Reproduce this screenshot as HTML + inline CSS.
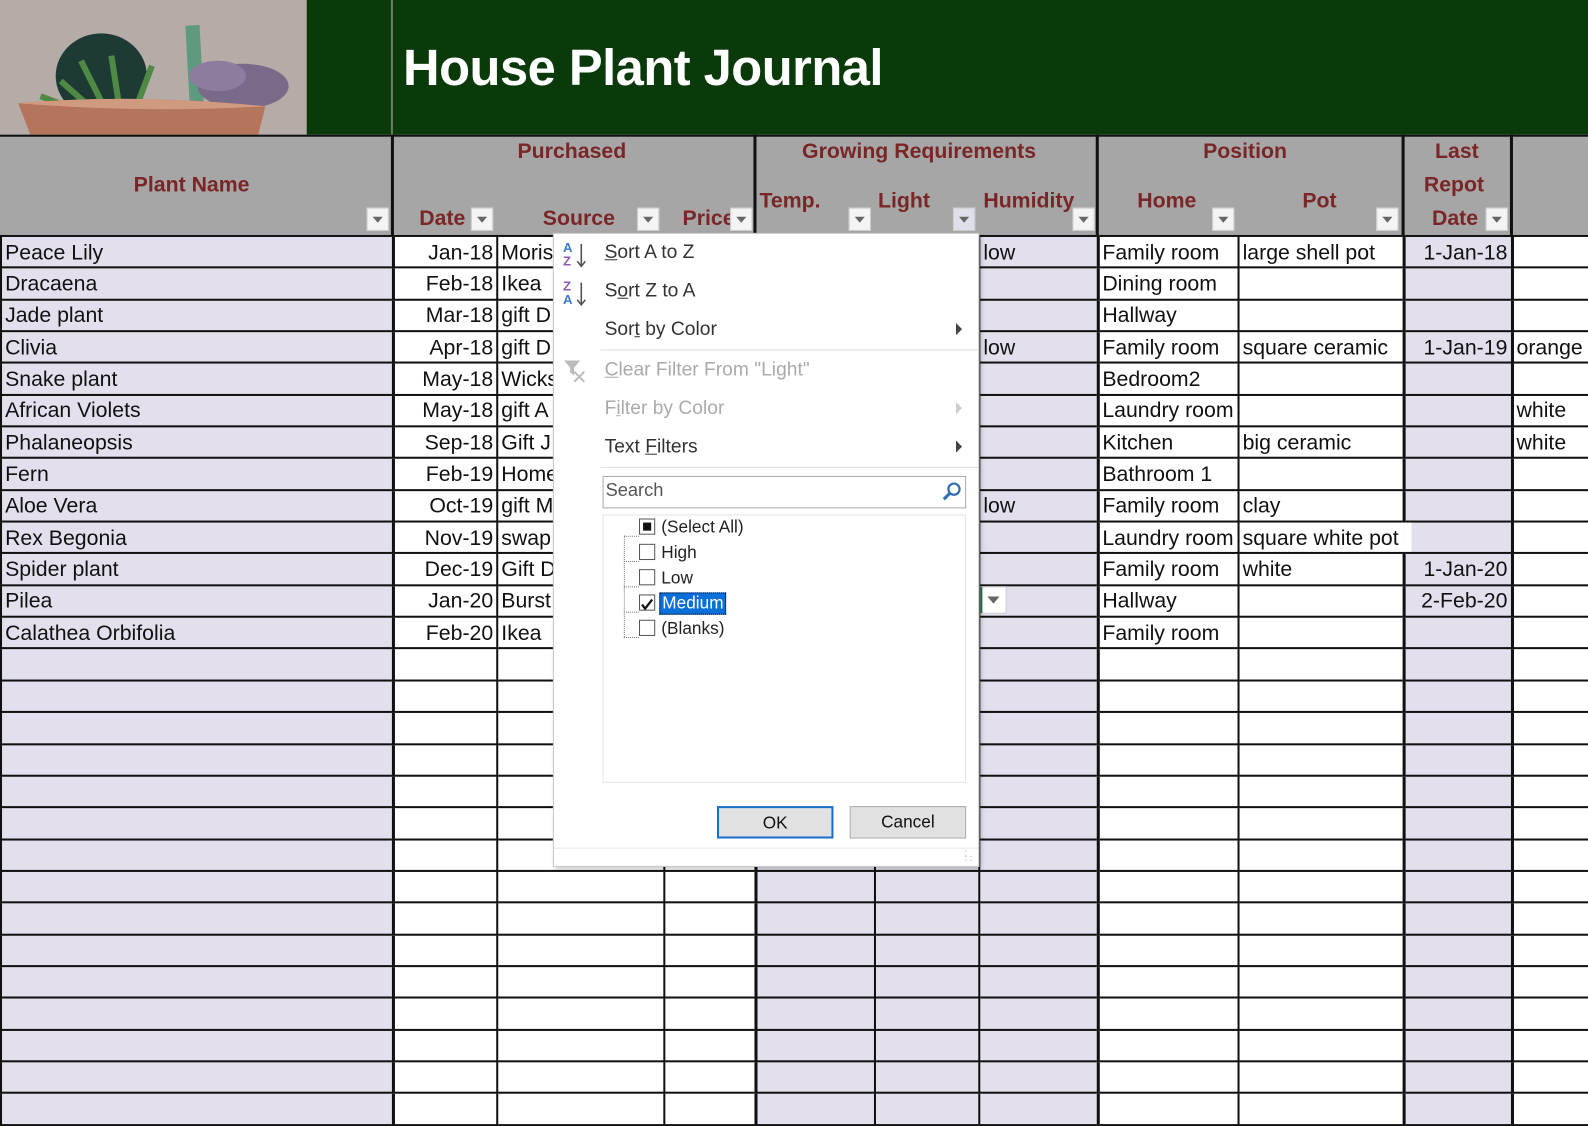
<!DOCTYPE html>
<html><head><meta charset="utf-8"><style>
*{box-sizing:border-box;margin:0;padding:0}
body{width:1588px;height:1112px;overflow:hidden;background:#fff;font-family:"Liberation Sans",sans-serif;position:relative}
#w{position:absolute;left:0;top:0;width:1570px;height:1100px;transform:scale(1.0127);transform-origin:0 0}
.ban{position:absolute;left:0;top:0;width:1570px;height:133px;background:#0a3a0a}
.sep{position:absolute;left:386px;top:0;width:2px;height:133px;background:#6b7d6b}
.title{position:absolute;left:398px;top:38px;color:#fff;font-weight:bold;font-size:50px;letter-spacing:-0.5px}
.hdr{position:absolute;left:0;top:133px;width:1570px;height:99px;background:#a6a6a6;border-top:2px solid #111}
.h{position:absolute;color:#7a2626;font-weight:bold;font-size:21px;white-space:nowrap}
.vl{position:absolute;top:133px;height:99px;width:3px;background:#111}
.dd{position:absolute;top:205px;width:22px;height:23px;background:#f4f4f4;border:1px solid #ccc}
.dd:after{content:"";position:absolute;left:5px;top:8px;border-left:5px solid transparent;border-right:5px solid transparent;border-top:6px solid #666}
table{position:absolute;left:0;top:232px;border-collapse:collapse;table-layout:fixed;width:1590px}
td{height:31.35px;border:2px solid #111;font-size:21px;color:#111;white-space:nowrap;overflow:visible;padding:2px 3px 0;line-height:26px}
td.l{background:#e3dfec}
td.r{text-align:right}
td.tk{border-right:3px solid #111}
.dlg{position:absolute;left:546px;top:230px;width:421px;height:626px;background:#fff;border:1px solid #c8c8c8;box-shadow:2px 2px 4px rgba(0,0,0,.25);font-size:19px;color:#333}
.mi{position:absolute;left:50px;white-space:nowrap}
.dis{color:#aaa}
.arr{position:absolute;right:16px;width:0;height:0;border-top:6px solid transparent;border-bottom:6px solid transparent;border-left:6px solid #444}
.hr{position:absolute;left:46px;right:0;height:1px;background:#ddd}
.cb{position:absolute;left:84px;width:16px;height:16px;border:1px solid #555;background:#fff}
.lt{position:absolute;left:106px;font-size:17px;color:#222}
.btn{position:absolute;top:565px;height:32px;background:#e1e1e1;border:1px solid #adadad;font-size:17px;text-align:center;line-height:30px;color:#111}
</style></head><body><div id="w">
<div class="ban"></div>
<svg style="position:absolute;left:0;top:0" width="303" height="133" viewBox="0 0 303 133">
<rect width="303" height="133" fill="#b5aca8"/>
<ellipse cx="100" cy="75" rx="45" ry="42" fill="#1e3a34"/>
<g stroke="#4f8a45" stroke-width="6" fill="none"><path d="M120 120 L110 55"/><path d="M110 120 L80 60"/><path d="M130 118 L150 65"/><path d="M100 118 L40 95"/><path d="M105 120 L60 80"/></g>
<path d="M195 115 L190 25" stroke="#5d9a80" stroke-width="14"/>
<ellipse cx="240" cy="85" rx="45" ry="22" fill="#7a6a8a"/>
<ellipse cx="215" cy="75" rx="28" ry="15" fill="#8d7c9e"/>
<path d="M18 102 Q130 92 262 105 L255 133 L30 133 Z" fill="#b5755a"/>
<path d="M18 102 Q130 92 262 105 Q140 112 18 102Z" fill="#d09a7e"/>
</svg>
<div class="sep"></div>
<div class="title">House Plant Journal</div>
<div class="hdr"></div>
<div class="vl" style="left:386px"></div><div class="vl" style="left:744px"></div><div class="vl" style="left:1082px"></div><div class="vl" style="left:1384px"></div><div class="vl" style="left:1491px"></div>
<div class="h" style="left:132px;top:171px">Plant Name</div>
<div class="h" style="left:511px;top:138px">Purchased</div>
<div class="h" style="left:414px;top:204px">Date</div>
<div class="h" style="left:536px;top:204px">Source</div>
<div class="h" style="left:674px;top:204px;width:47px;overflow:hidden">Price</div>
<div class="h" style="left:792px;top:138px">Growing Requirements</div>
<div class="h" style="left:750px;top:187px">Temp.</div>
<div class="h" style="left:867px;top:187px">Light</div>
<div class="h" style="left:971px;top:187px;width:98px;overflow:hidden">Humidity</div>
<div class="h" style="left:1188px;top:138px">Position</div>
<div class="h" style="left:1123px;top:187px">Home</div>
<div class="h" style="left:1286px;top:187px">Pot</div>
<div class="h" style="left:1417px;top:138px">Last</div>
<div class="h" style="left:1406px;top:171px">Repot</div>
<div class="h" style="left:1414px;top:204px">Date</div>
<div class="dd" style="left:362px"></div><div class="dd" style="left:465px"></div><div class="dd" style="left:629px"></div><div class="dd" style="left:721px"></div><div class="dd" style="left:838px"></div><div class="dd" style="left:941px;background:#dde0e8"></div><div class="dd" style="left:1059px"></div><div class="dd" style="left:1197px"></div><div class="dd" style="left:1359px"></div><div class="dd" style="left:1467px"></div>
<table>
<colgroup><col style="width:387px"><col style="width:103px"><col style="width:165px"><col style="width:90px"><col style="width:118px"><col style="width:103px"><col style="width:117px"><col style="width:139px"><col style="width:163px"><col style="width:107px"><col style="width:98px"></colgroup>
<tr><td class="l tk">Peace Lily</td><td class="r">Jan-18</td><td>Moris</td><td class="tk"></td><td class="l"></td><td class="l"></td><td class="l tk">low</td><td>Family room</td><td class="tk">large shell pot</td><td class="l r tk">1-Jan-18</td><td></td></tr>
<tr><td class="l tk">Dracaena</td><td class="r">Feb-18</td><td>Ikea</td><td class="tk"></td><td class="l"></td><td class="l"></td><td class="l tk"></td><td>Dining room</td><td class="tk"></td><td class="l tk"></td><td></td></tr>
<tr><td class="l tk">Jade plant</td><td class="r">Mar-18</td><td>gift D</td><td class="tk"></td><td class="l"></td><td class="l"></td><td class="l tk"></td><td>Hallway</td><td class="tk"></td><td class="l tk"></td><td></td></tr>
<tr><td class="l tk">Clivia</td><td class="r">Apr-18</td><td>gift D</td><td class="tk"></td><td class="l"></td><td class="l"></td><td class="l tk">low</td><td>Family room</td><td class="tk">square ceramic</td><td class="l r tk">1-Jan-19</td><td>orange</td></tr>
<tr><td class="l tk">Snake plant</td><td class="r">May-18</td><td>Wicks</td><td class="tk"></td><td class="l"></td><td class="l"></td><td class="l tk"></td><td>Bedroom2</td><td class="tk"></td><td class="l tk"></td><td></td></tr>
<tr><td class="l tk">African Violets</td><td class="r">May-18</td><td>gift A</td><td class="tk"></td><td class="l"></td><td class="l"></td><td class="l tk"></td><td>Laundry room</td><td class="tk"></td><td class="l tk"></td><td>white</td></tr>
<tr><td class="l tk">Phalaneopsis</td><td class="r">Sep-18</td><td>Gift J</td><td class="tk"></td><td class="l"></td><td class="l"></td><td class="l tk"></td><td>Kitchen</td><td class="tk">big ceramic</td><td class="l tk"></td><td>white</td></tr>
<tr><td class="l tk">Fern</td><td class="r">Feb-19</td><td>Home</td><td class="tk"></td><td class="l"></td><td class="l"></td><td class="l tk"></td><td>Bathroom 1</td><td class="tk"></td><td class="l tk"></td><td></td></tr>
<tr><td class="l tk">Aloe Vera</td><td class="r">Oct-19</td><td>gift M</td><td class="tk"></td><td class="l"></td><td class="l"></td><td class="l tk">low</td><td>Family room</td><td class="tk">clay</td><td class="l tk"></td><td></td></tr>
<tr><td class="l tk">Rex Begonia</td><td class="r">Nov-19</td><td>swap</td><td class="tk"></td><td class="l"></td><td class="l"></td><td class="l tk"></td><td>Laundry room</td><td style="border-right:none">square white pot</td><td class="tk" style="background:linear-gradient(90deg,#fff 0 8px,#e3dfec 8px);border-left:none"></td><td></td></tr>
<tr><td class="l tk">Spider plant</td><td class="r">Dec-19</td><td>Gift D</td><td class="tk"></td><td class="l"></td><td class="l"></td><td class="l tk"></td><td>Family room</td><td class="tk">white</td><td class="l r tk">1-Jan-20</td><td></td></tr>
<tr><td class="l tk">Pilea</td><td class="r">Jan-20</td><td>Burst</td><td class="tk"></td><td class="l"></td><td class="l"></td><td class="l tk"></td><td>Hallway</td><td class="tk"></td><td class="l r tk">2-Feb-20</td><td></td></tr>
<tr><td class="l tk">Calathea Orbifolia</td><td class="r">Feb-20</td><td>Ikea</td><td class="tk"></td><td class="l"></td><td class="l"></td><td class="l tk"></td><td>Family room</td><td class="tk"></td><td class="l tk"></td><td></td></tr>
<tr><td class="l tk"></td><td></td><td></td><td class="tk"></td><td class="l"></td><td class="l"></td><td class="l tk"></td><td></td><td class="tk"></td><td class="l tk"></td><td></td></tr>
<tr><td class="l tk"></td><td></td><td></td><td class="tk"></td><td class="l"></td><td class="l"></td><td class="l tk"></td><td></td><td class="tk"></td><td class="l tk"></td><td></td></tr>
<tr><td class="l tk"></td><td></td><td></td><td class="tk"></td><td class="l"></td><td class="l"></td><td class="l tk"></td><td></td><td class="tk"></td><td class="l tk"></td><td></td></tr>
<tr><td class="l tk"></td><td></td><td></td><td class="tk"></td><td class="l"></td><td class="l"></td><td class="l tk"></td><td></td><td class="tk"></td><td class="l tk"></td><td></td></tr>
<tr><td class="l tk"></td><td></td><td></td><td class="tk"></td><td class="l"></td><td class="l"></td><td class="l tk"></td><td></td><td class="tk"></td><td class="l tk"></td><td></td></tr>
<tr><td class="l tk"></td><td></td><td></td><td class="tk"></td><td class="l"></td><td class="l"></td><td class="l tk"></td><td></td><td class="tk"></td><td class="l tk"></td><td></td></tr>
<tr><td class="l tk"></td><td></td><td></td><td class="tk"></td><td class="l"></td><td class="l"></td><td class="l tk"></td><td></td><td class="tk"></td><td class="l tk"></td><td></td></tr>
<tr><td class="l tk"></td><td></td><td></td><td class="tk"></td><td class="l"></td><td class="l"></td><td class="l tk"></td><td></td><td class="tk"></td><td class="l tk"></td><td></td></tr>
<tr><td class="l tk"></td><td></td><td></td><td class="tk"></td><td class="l"></td><td class="l"></td><td class="l tk"></td><td></td><td class="tk"></td><td class="l tk"></td><td></td></tr>
<tr><td class="l tk"></td><td></td><td></td><td class="tk"></td><td class="l"></td><td class="l"></td><td class="l tk"></td><td></td><td class="tk"></td><td class="l tk"></td><td></td></tr>
<tr><td class="l tk"></td><td></td><td></td><td class="tk"></td><td class="l"></td><td class="l"></td><td class="l tk"></td><td></td><td class="tk"></td><td class="l tk"></td><td></td></tr>
<tr><td class="l tk"></td><td></td><td></td><td class="tk"></td><td class="l"></td><td class="l"></td><td class="l tk"></td><td></td><td class="tk"></td><td class="l tk"></td><td></td></tr>
<tr><td class="l tk"></td><td></td><td></td><td class="tk"></td><td class="l"></td><td class="l"></td><td class="l tk"></td><td></td><td class="tk"></td><td class="l tk"></td><td></td></tr>
<tr><td class="l tk"></td><td></td><td></td><td class="tk"></td><td class="l"></td><td class="l"></td><td class="l tk"></td><td></td><td class="tk"></td><td class="l tk"></td><td></td></tr>
<tr><td class="l tk"></td><td></td><td></td><td class="tk"></td><td class="l"></td><td class="l"></td><td class="l tk"></td><td></td><td class="tk"></td><td class="l tk"></td><td></td></tr>
</table>
<div style="position:absolute;left:968px;top:579px;width:26px;height:27px;background:#fff;border:1px solid #ccc;border-left:2px solid #217346"></div>
<div style="position:absolute;left:975px;top:589px;border-left:6px solid transparent;border-right:6px solid transparent;border-top:7px solid #666"></div>
<div class="dlg">
 <svg style="position:absolute;left:8px;top:6px" width="28" height="30" viewBox="0 0 28 30"><text x="1" y="12" font-size="13" font-weight="bold" fill="#3d7cc9" font-family="Liberation Sans">A</text><text x="1" y="25" font-size="13" font-weight="bold" fill="#8e5bb5" font-family="Liberation Sans">Z</text><path d="M19 4V25M15 21l4 5 4-5" stroke="#555" stroke-width="1.6" fill="none"/></svg>
 <svg style="position:absolute;left:8px;top:44px" width="28" height="30" viewBox="0 0 28 30"><text x="1" y="12" font-size="13" font-weight="bold" fill="#8e5bb5" font-family="Liberation Sans">Z</text><text x="1" y="25" font-size="13" font-weight="bold" fill="#3d7cc9" font-family="Liberation Sans">A</text><path d="M19 4V25M15 21l4 5 4-5" stroke="#555" stroke-width="1.6" fill="none"/></svg>
 <div class="mi" style="top:8px"><u>S</u>ort A to Z</div>
 <div class="mi" style="top:46px">S<u>o</u>rt Z to A</div>
 <div class="mi" style="top:84px">Sor<u>t</u> by Color</div><div class="arr" style="top:88px"></div>
 <div class="hr" style="top:114px"></div>
 <svg style="position:absolute;left:8px;top:122px" width="28" height="28" viewBox="0 0 28 28"><path d="M2 3h16l-6 7v8l-4-3v-5z" fill="#bbb"/><path d="M12 14l10 10M22 14L12 24" stroke="#bbb" stroke-width="2"/></svg>
 <div class="mi dis" style="top:124px"><u>C</u>lear Filter From "Light"</div>
 <div class="mi dis" style="top:162px">F<u>i</u>lter by Color</div><div class="arr" style="top:166px;border-left-color:#ccc"></div>
 <div class="mi" style="top:200px">Text <u>F</u>ilters</div><div class="arr" style="top:204px"></div>
 <div class="hr" style="top:230px"></div>
 <div style="position:absolute;left:48px;top:239px;width:359px;height:32px;border:1px solid #aaa;font-size:18px;color:#555;padding:3px 2px">Search</div>
 <svg style="position:absolute;left:383px;top:244px" width="20" height="20" viewBox="0 0 20 20"><circle cx="12" cy="8" r="5.5" stroke="#2f6db5" stroke-width="2.2" fill="none"/><path d="M8 12L2 18" stroke="#2f6db5" stroke-width="3"/></svg>
 <div style="position:absolute;left:48px;top:277px;width:359px;height:265px;border:1px solid #e3e3e3"></div>
 <div style="position:absolute;left:69px;top:298px;height:100px;border-left:1px dotted #777"></div>
 <div style="position:absolute;left:69px;top:298px;width:15px;border-top:1px dotted #777"></div>
 <div style="position:absolute;left:69px;top:323px;width:15px;border-top:1px dotted #777"></div>
 <div style="position:absolute;left:69px;top:348px;width:15px;border-top:1px dotted #777"></div>
 <div style="position:absolute;left:69px;top:373px;width:15px;border-top:1px dotted #777"></div>
 <div style="position:absolute;left:69px;top:398px;width:15px;border-top:1px dotted #777"></div>
 <div class="cb" style="top:281px"><div style="margin:3px;width:8px;height:8px;background:#111"></div></div><div class="lt" style="top:280px">(Select All)</div>
 <div class="cb" style="top:306px"></div><div class="lt" style="top:305px">High</div>
 <div class="cb" style="top:331px"></div><div class="lt" style="top:330px">Low</div>
 <div class="cb" style="top:356px"><svg width="14" height="14" viewBox="0 0 14 14"><path d="M2 7l3 4 7-9" stroke="#111" stroke-width="2.2" fill="none"/></svg></div><div class="lt" style="top:354px;left:104px;background:#0a6fd8;color:#fff;padding:0 2px;border:1px dotted #000">Medium</div>
 <div class="cb" style="top:381px"></div><div class="lt" style="top:380px">(Blanks)</div>
 <div class="btn" style="left:161px;width:115px;border:2px solid #1a6fc9">OK</div>
 <div class="btn" style="left:292px;width:115px">Cancel</div>
 <div style="position:absolute;left:0;right:0;top:606px;height:1px;background:#e6e6e6"></div>
 <div style="position:absolute;right:6px;bottom:5px;font-size:9px;color:#999;line-height:5px">:<br>: :</div>
</div>
</div></body></html>
